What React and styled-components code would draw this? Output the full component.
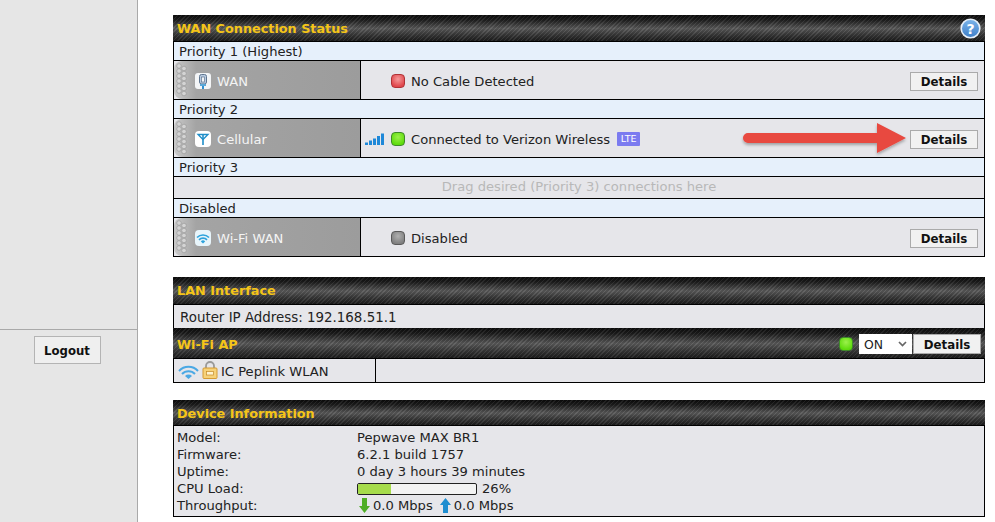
import React from "react";
import styled, { createGlobalStyle } from "styled-components";

const GlobalStyle = createGlobalStyle`
  html, body {
    margin: 0;
    padding: 0;
    background: #fff;
    overflow: hidden;
  }
  body {
    font-family: "DejaVu Sans", Verdana, sans-serif;
    font-size: 13.1px;
    color: #222;
  }
`;

const Page = styled.div`
  display: flex;
  width: 995px;
  height: 522px;
  overflow: hidden;
`;

const Sidebar = styled.div`
  width: 138px;
  height: 522px;
  box-sizing: border-box;
  background: #e6e6e6;
  border-right: 1px solid #a9a9a9;
  padding-top: 329px;
  flex: none;
`;

const LogoutArea = styled.div`
  border-top: 1px solid #a9a9a9;
  display: flex;
  justify-content: center;
  padding: 6px 3px 0 0;
`;

const LogoutButton = styled.button`
  width: 67px;
  height: 28px;
  padding: 2px 0 0;
  background: #efefef;
  border: 1px solid #b4b4b4;
  font: bold 11.7px "DejaVu Sans", Verdana, sans-serif;
  color: #111;
`;

const Main = styled.div`
  width: 812px;
  margin-left: 35px;
  padding-top: 15px;
  display: flex;
  flex-direction: column;
`;

const Stage = styled.div`
  position: relative;
`;

const Panel = styled.div`
  border: 1px solid #000;
  border-top: 0;
  margin-bottom: ${({ $gap }) => $gap || 0}px;
`;

const HeaderBar = styled.div`
  height: ${({ $h }) => $h}px;
  margin: 0 -1px;
  padding: ${({ $pt }) => $pt || 0}px 4px 0;
  display: flex;
  align-items: center;
  justify-content: space-between;
  border-bottom: 1px solid #000;
  box-sizing: border-box;
  background:
    repeating-linear-gradient(
      135deg,
      rgba(255, 255, 255, 0.07) 0 1px,
      rgba(0, 0, 0, 0.1) 1px 3px
    ),
    linear-gradient(#0c0c0c 0%, #1c1c1c 18%, #5c5c5c 52%, #3a3a3a 75%, #1c1c1c 100%);
`;

const HeaderTitle = styled.span`
  color: #f5c518;
  font-weight: bold;
  font-size: 12.8px;
`;

const HeaderRight = styled.div`
  display: flex;
  align-items: center;
`;

const PriorityRow = styled.div`
  height: 18px;
  line-height: 20px;
  padding-left: 5px;
  background: #e6f0fb;
  border-bottom: 1px solid #000;
`;

const ConnRow = styled.div`
  height: 38px;
  display: flex;
  background: #e6e6ea;
  border-bottom: ${({ $last }) => ($last ? 0 : "1px solid #000")};
`;

const Handle = styled.div`
  width: 187px;
  flex: none;
  display: flex;
  align-items: center;
  border-right: 1px solid #000;
  border-radius: 8px 0 0 8px;
  background: linear-gradient(90deg, #c9c9c9 0, #a4a4a4 22px, #9c9c9c 100%);
  color: #f4f4f4;
  box-sizing: border-box;
`;

const Grip = styled.svg`
  width: 14px;
  height: 36px;
  margin-left: 1px;
  flex: none;
`;

const HandleLabel = styled.div`
  display: flex;
  align-items: center;
  padding-top: 2px;
`;

const ConnIcon = styled.svg`
  width: 18px;
  height: 18px;
  margin: 0 5px 0 5px;
  flex: none;
`;

const ConnBody = styled.div`
  flex: 1;
  display: flex;
  align-items: center;
  padding: 2px 6px 0 0;
  box-sizing: border-box;
`;

const SignalSlot = styled.div`
  width: 24px;
  margin-right: 1px;
  height: 12px;
  display: flex;
  justify-content: flex-end;
  flex: none;
`;

const Led = styled.span`
  display: inline-block;
  width: 14px;
  height: 14px;
  box-sizing: border-box;
  border-radius: 4px;
  flex: none;
  margin: 0 ${({ $mr }) => $mr ?? 6}px 0 ${({ $ml }) => $ml ?? 5}px;
  border: 1px solid ${({ $border }) => $border};
  background: radial-gradient(circle at 50% 35%, ${({ $light }) => $light}, ${({ $color }) => $color} 75%);
`;

const LteBadge = styled.span`
  margin-left: 7px;
  width: 23px;
  height: 14px;
  line-height: 14px;
  text-align: center;
  background: #7b7bf0;
  color: #fff;
  font-size: 9.5px;
  border-radius: 1px;
`;

const Spacer = styled.div`
  flex: 1;
`;

const DetailsButton = styled.button`
  width: 68px;
  height: ${({ $h }) => $h || 19}px;
  padding: 1px 0 0;
  background: #f1f1f1;
  border: 1px solid #aaa;
  font: bold 11.8px "DejaVu Sans", Verdana, sans-serif;
  color: #111;
`;

const DropZone = styled.div`
  height: 21px;
  line-height: 20px;
  text-align: center;
  color: #b8b8b8;
  background: #e6e6ea;
  border-bottom: 1px solid #000;
`;

const IpRow = styled.div`
  height: 23px;
  line-height: 25px;
  padding-left: 6px;
  background: #e6e6ea;
  font-size: 13.4px;
`;

const OnSelect = styled.div`
  width: 53px;
  height: 20px;
  margin: 0 1px 0 6px;
  padding: 0 5px;
  box-sizing: border-box;
  background: #fff;
  display: flex;
  align-items: center;
  justify-content: space-between;
  font-size: 12.4px;
  color: #222;
`;

const SsidRow = styled.div`
  height: 23px;
  display: flex;
  background: #e6e6ea;
`;

const SsidCell = styled.div`
  width: 202px;
  border-right: 1px solid #000;
  display: flex;
  align-items: center;
  padding: 2px 0 0 4px;
  box-sizing: border-box;
`;

const WifiGlyph = styled.svg`
  width: 21px;
  height: 14px;
  margin-right: 3px;
  flex: none;
`;

const LockGlyph = styled.svg`
  width: 16px;
  height: 18px;
  margin: -3px 3px 0 0;
  flex: none;
`;

const InfoGrid = styled.div`
  display: grid;
  grid-template-columns: 180px 1fr;
  grid-auto-rows: 17px;
  align-items: center;
  padding: 3px 3px 2px;
  background: #e6e6ea;
`;

const InfoValue = styled.div`
  display: flex;
  align-items: center;
`;

const LoadBar = styled.div`
  width: 120px;
  height: 12px;
  box-sizing: border-box;
  border: 1px solid #222;
  border-radius: 2px;
  background: #f3f3f3;
  margin-right: 5px;
  overflow: hidden;
`;

const LoadFill = styled.div`
  height: 100%;
  background: #a6dc4c;
`;

const RateArrow = styled.svg`
  width: 11px;
  height: 15px;
  margin: 0 3px 0 ${({ $ml }) => $ml}px;
  flex: none;
`;

const Arrow = styled.svg`
  position: absolute;
  left: 570px;
  top: 104px;
  width: 172px;
  height: 40px;
  overflow: visible;
`;

const GripDots = () => (
  <Grip viewBox="0 0 14 36">
    {[4, 9, 14, 19, 24, 29].map((y) =>
      [4, 9].map((x) => (
        <circle
          key={`${x}-${y}`}
          cx={x}
          cy={y + (x === 9 ? 2.5 : 0)}
          r="2.3"
          fill="#d4d4d4"
          stroke="#949494"
          strokeWidth="0.6"
        />
      ))
    )}
  </Grip>
);

const WanIcon = () => (
  <ConnIcon viewBox="0 0 18 18">
    <rect x="1" y="1" width="16" height="16" rx="3" fill="#f3f5f7" />
    <rect x="5.5" y="2.5" width="7" height="9.5" rx="2" fill="#b9cbe0" stroke="#5e7590" />
    <rect x="7.5" y="5" width="3" height="5" fill="#f3f5f7" stroke="#5e7590" strokeWidth="0.7" />
    <rect x="6" y="12" width="6" height="2" fill="#5aa7d8" />
    <rect x="8" y="14" width="2" height="3" fill="#2f8fd0" />
  </ConnIcon>
);

const CellIcon = () => (
  <ConnIcon viewBox="0 0 18 18">
    <rect x="1" y="1" width="16" height="16" rx="4" fill="#fff" />
    <path d="M4 4.5h10L9 9.5z" fill="none" stroke="#1f8ec9" strokeWidth="1.3" />
    <path d="M9 4.5V15" stroke="#1f8ec9" strokeWidth="1.6" />
  </ConnIcon>
);

const WifiBadgeIcon = () => (
  <ConnIcon viewBox="0 0 18 18">
    <rect x="1" y="1" width="16" height="16" rx="4" fill="#e8f5fb" />
    <path d="M3 8.5a8.5 8.5 0 0 1 12 0M5 10.8a5.6 5.6 0 0 1 8 0" fill="none" stroke="#2ea3dc" strokeWidth="1.7" />
    <path d="M9 14.5l-2.2-2a3 3 0 0 1 4.4 0z" fill="#2ea3dc" />
  </ConnIcon>
);

const SignalBars = () => (
  <svg width="20" height="12" viewBox="0 0 20 12">
    <rect x="0" y="9.5" width="3" height="2.5" fill="#1e88d8" />
    <rect x="4" y="7.5" width="3" height="4.5" fill="#1e88d8" />
    <rect x="8" y="5.5" width="3" height="6.5" fill="#1e88d8" />
    <rect x="12" y="3" width="3" height="9" fill="#1e88d8" />
    <rect x="16" y="0.5" width="3" height="11.5" fill="#1e88d8" />
  </svg>
);

const HelpIcon = () => (
  <svg width="21" height="21" viewBox="0 0 21 21">
    <defs>
      <linearGradient id="helpFill" x1="0" y1="0" x2="0" y2="1">
        <stop offset="0" stopColor="#7db5ea" />
        <stop offset="1" stopColor="#3d7ec8" />
      </linearGradient>
    </defs>
    <circle cx="10.5" cy="10.5" r="9.3" fill="url(#helpFill)" stroke="#e8f0f8" strokeWidth="1.6" />
    <text x="10.5" y="15.5" textAnchor="middle" fontSize="14" fontWeight="bold" fill="#fff" fontFamily="DejaVu Sans">?</text>
  </svg>
);

const WifiSmall = () => (
  <WifiGlyph viewBox="0 0 21 14">
    <path d="M1 6a13 13 0 0 1 19 0M4 9a9 9 0 0 1 13 0" fill="none" stroke="#4aa8e4" strokeWidth="2" />
    <path d="M10.5 14l-3.5-3a5 5 0 0 1 7 0z" fill="#4aa8e4" />
  </WifiGlyph>
);

const LockIcon = () => (
  <LockGlyph viewBox="0 0 16 18">
    <path d="M4 8V5a4 4 0 0 1 8 0v3" fill="none" stroke="#9a9a9a" strokeWidth="1.8" />
    <rect x="1" y="7" width="14" height="10.5" rx="1" fill="#f6d27a" stroke="#d59a32" />
    <rect x="4.5" y="10.5" width="7" height="3.5" fill="#fff3cf" stroke="#c58a26" strokeWidth="0.7" />
  </LockGlyph>
);

const VertArrow = ({ color, up, ml }) => (
  <RateArrow viewBox="0 0 11 15" $ml={ml}>
    <path d={up ? "M5.5 0L11 7H8V15H3V7H0z" : "M5.5 15L11 8H8V0H3V8H0z"} fill={color} />
  </RateArrow>
);

const Chevron = () => (
  <svg width="9" height="6" viewBox="0 0 9 6">
    <path d="M1 1l3.5 3.5L8 1" fill="none" stroke="#666" strokeWidth="1.7" />
  </svg>
);

const leds = {
  red: { $color: "#e0474c", $light: "#f59a9a", $border: "#b03236" },
  green: { $color: "#5fdc0c", $light: "#9cf04c", $border: "#3f8a2a" },
  gray: { $color: "#808080", $light: "#b0b0b0", $border: "#5a5a5a" },
};

const ConnectionRow = ({ icon, name, led, status, signal, lte, last }) => (
  <ConnRow $last={last}>
    <Handle>
      <GripDots />
      <HandleLabel>
        {icon}
        {name}
      </HandleLabel>
    </Handle>
    <ConnBody>
      <SignalSlot>{signal && <SignalBars />}</SignalSlot>
      <Led {...leds[led]} />
      {status}
      {lte && <LteBadge>LTE</LteBadge>}
      <Spacer />
      <DetailsButton>Details</DetailsButton>
    </ConnBody>
  </ConnRow>
);

export default function App() {
  return (
    <Page>
      <GlobalStyle />
      <Sidebar>
        <LogoutArea>
          <LogoutButton>Logout</LogoutButton>
        </LogoutArea>
      </Sidebar>
      <Main>
        <Stage>
          <Panel $gap={20}>
            <HeaderBar $h={27} $pt={1}>
              <HeaderTitle>WAN Connection Status</HeaderTitle>
              <HelpIcon />
            </HeaderBar>
            <PriorityRow>Priority 1 (Highest)</PriorityRow>
            <ConnectionRow icon={<WanIcon />} name="WAN" led="red" status="No Cable Detected" />
            <PriorityRow>Priority 2</PriorityRow>
            <ConnectionRow
              icon={<CellIcon />}
              name="Cellular"
              led="green"
              status="Connected to Verizon Wireless"
              signal
              lte
            />
            <PriorityRow>Priority 3</PriorityRow>
            <DropZone>Drag desired (Priority 3) connections here</DropZone>
            <PriorityRow>Disabled</PriorityRow>
            <ConnectionRow icon={<WifiBadgeIcon />} name="Wi-Fi WAN" led="gray" status="Disabled" last />
          </Panel>
          <Arrow viewBox="0 0 172 40">
            <defs>
              <filter id="arrowShadow" x="-5%" y="-20%" width="110%" height="150%">
                <feDropShadow dx="0" dy="2" stdDeviation="1.5" floodColor="#000" floodOpacity="0.3" />
              </filter>
            </defs>
            <path
              d="M5 14H134V4L163 19L134 34V24H5a5 5 0 0 1 0-10z"
              fill="#e8483f"
              filter="url(#arrowShadow)"
            />
          </Arrow>
        </Stage>
        <Panel $gap={17}>
          <HeaderBar $h={28}>
            <HeaderTitle>LAN Interface</HeaderTitle>
          </HeaderBar>
          <IpRow>Router IP Address: 192.168.51.1</IpRow>
          <HeaderBar $h={31} $pt={2}>
            <HeaderTitle>Wi-Fi AP</HeaderTitle>
            <HeaderRight>
              <Led {...leds.green} $ml={0} $mr={0} />
              <OnSelect>
                ON <Chevron />
              </OnSelect>
              <DetailsButton $h={20}>Details</DetailsButton>
            </HeaderRight>
          </HeaderBar>
          <SsidRow>
            <SsidCell>
              <WifiSmall />
              <LockIcon />
              IC Peplink WLAN
            </SsidCell>
          </SsidRow>
        </Panel>
        <Panel>
          <HeaderBar $h={26} $pt={1}>
            <HeaderTitle>Device Information</HeaderTitle>
          </HeaderBar>
          <InfoGrid>
            <div>Model:</div>
            <InfoValue>Pepwave MAX BR1</InfoValue>
            <div>Firmware:</div>
            <InfoValue>6.2.1 build 1757</InfoValue>
            <div>Uptime:</div>
            <InfoValue>0 day 3 hours 39 minutes</InfoValue>
            <div>CPU Load:</div>
            <InfoValue>
              <LoadBar>
                <LoadFill style={{ width: "28%" }} />
              </LoadBar>
              26%
            </InfoValue>
            <div>Throughput:</div>
            <InfoValue>
              <VertArrow color="#4fae26" ml={2} />
              0.0 Mbps
              <VertArrow color="#1f8ed0" up ml={7} />
              0.0 Mbps
            </InfoValue>
          </InfoGrid>
        </Panel>
      </Main>
    </Page>
  );
}
